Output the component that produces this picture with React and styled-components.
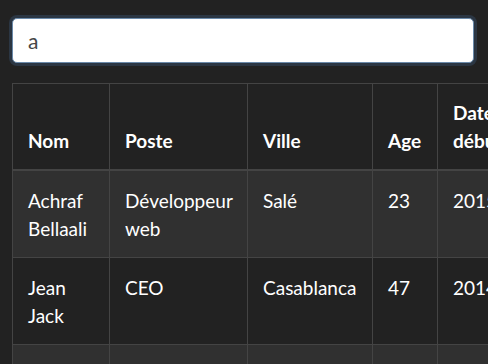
import React from 'react';
import styled, { createGlobalStyle } from 'styled-components';

const GlobalStyle = createGlobalStyle`
  html, body {
    margin: 0;
    background: #222;
    overflow: hidden;
  }
  body {
    font-family: Lato, "Open Sans", sans-serif;
    color: #fff;
  }
`;

const Page = styled.div`
  padding: 18px 14px 0 12px;
  width: 488px;
  box-sizing: border-box;
`;

const Search = styled.input`
  display: block;
  width: 100%;
  height: 45px;
  box-sizing: border-box;
  margin: 0 0 20px;
  padding: 0 15px;
  border: 1px solid #6a89a9;
  border-radius: 5px;
  background: #fff;
  color: #464646;
  font-family: Lato, sans-serif;
  font-size: 21px;
  font-weight: 400;
  outline: none;
  box-shadow: 0 0 0 3px #2b3643;
`;

const Table = styled.table`
  border-collapse: collapse;
  font-size: 19px;
  line-height: 28px;
  table-layout: fixed;
  width: 660px;
`;

const Col = styled.col`
  width: ${p => p.$w}px;
`;

const Row = styled.tr`
  background: ${p => (p.$striped ? '#303030' : '#222')};
`;

const Head = styled.th`
  text-align: left;
  font-weight: 700;
  vertical-align: bottom;
  padding: 15px 15px 14px;
  border: 1px solid #444;
  border-bottom: 2px solid #444;
`;

const Cell = styled.td`
  vertical-align: top;
  padding: 16px 15px 14px;
  border: 1px solid #444;
  height: 56px;
`;

const columns = [
  { label: 'Nom', w: 97 },
  { label: 'Poste', w: 138 },
  { label: 'Ville', w: 125 },
  { label: 'Age', w: 65 },
  { label: 'Date de début', w: 125 },
  { label: 'Salaire', w: 110 },
];

const rows = [
  ['Achraf Bellaali', 'Développeur web', 'Salé', '23', '2015/06/01', '4500'],
  ['Jean Jack', 'CEO', 'Casablanca', '47', '2014/01/15', '30000'],
  ['Sara Alami', 'Designer', 'Rabat', '29', '2016/09/20', '6000'],
];

export default function App() {
  return (
    <Page>
      <GlobalStyle />
      <Search defaultValue="a" autoFocus />
      <Table>
        <colgroup>
          {columns.map(c => (
            <Col key={c.label} $w={c.w} />
          ))}
        </colgroup>
        <thead>
          <Row>
            {columns.map(c => (
              <Head key={c.label}>{c.label}</Head>
            ))}
          </Row>
        </thead>
        <tbody>
          {rows.map((r, i) => (
            <Row key={i} $striped={i % 2 === 0}>
              {r.map((v, j) => (
                <Cell key={j}>{v}</Cell>
              ))}
            </Row>
          ))}
        </tbody>
      </Table>
    </Page>
  );
}
